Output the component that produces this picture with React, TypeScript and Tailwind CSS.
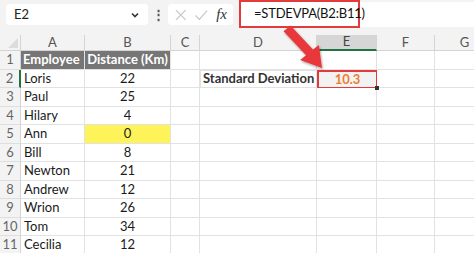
import React from "react";

const cols = [
  { key: "A", w: 64 },
  { key: "B", w: 86 },
  { key: "C", w: 29 },
  { key: "D", w: 117 },
  { key: "E", w: 60 },
  { key: "F", w: 58 },
  { key: "G", w: 60 },
];

const rows: [string, string][] = [
  ["Loris", "22"],
  ["Paul", "25"],
  ["Hilary", "4"],
  ["Ann", "0"],
  ["Bill", "8"],
  ["Newton", "21"],
  ["Andrew", "12"],
  ["Wrion", "26"],
  ["Tom", "34"],
  ["Cecilia", "12"],
];

const font = { fontFamily: "Lato, 'Open Sans', sans-serif" };

function Cell({ w, className = "", children }: { w: number; className?: string; children?: React.ReactNode }) {
  return (
    <div
      className={`h-full shrink-0 border-r border-b border-[#e2e2e2] flex items-center text-[13px] text-[#1a1a1a] overflow-visible whitespace-nowrap ${className}`}
      style={{ width: w }}
    >
      {children}
    </div>
  );
}

export default function App() {
  return (
    <div className="relative w-[474px] h-[253px] overflow-hidden bg-white" style={font}>
      {/* formula bar */}
      <div className="h-[35px] bg-[#f3f3f3] flex items-start">
        <div className="mt-[4px] ml-[6px] w-[142px] h-[21px] bg-white rounded-[4px] flex items-center justify-between px-[8px] text-[13px] text-[#222]">
          <span>E2</span>
          <svg width="10" height="10" viewBox="0 0 10 10">
            <path d="M2 3.5 L5 6.5 L8 3.5" stroke="#333" strokeWidth="1.6" fill="none" />
          </svg>
        </div>
        <div className="w-[20px] h-[29px] flex items-center justify-center text-[#555] text-[13px] font-bold">⋮</div>
        <div className="mt-[4px] w-[65px] h-[21px] bg-white rounded-[4px] flex items-center gap-[6px] px-[6px]">
          <svg width="14" height="14" viewBox="0 0 14 14">
            <path d="M2 2 L12 12 M12 2 L2 12" stroke="#c8c8c8" strokeWidth="1.3" />
          </svg>
          <svg width="15" height="14" viewBox="0 0 15 14">
            <path d="M1.5 7.5 L5.5 11.5 L13.5 2.5" stroke="#c8c8c8" strokeWidth="1.3" fill="none" />
          </svg>
          <span className="text-[15px] italic text-[#333] ml-[2px]" style={{ fontFamily: "'Liberation Serif', serif" }}>
            fx
          </span>
        </div>
        <div className="ml-[6px] mt-[2px] flex-1 h-[25px] bg-white relative">
          <div className="absolute left-0 top-[-2px] w-[121px] h-[28px] border-2 border-[#e23b3b] flex items-center pl-[13px] text-[13px] tracking-[-0.2px] text-[#111] whitespace-nowrap">
            =STDEVPA(B2:B11)
          </div>
        </div>
      </div>

      {/* column headers */}
      <div className="flex h-[16px] bg-[#f3f3f3] text-[13px] text-[#555]">
        <div className="w-[21px] shrink-0 border-r border-b border-[#d4d4d4] relative">
          <svg className="absolute right-[2px] bottom-[2px]" width="10" height="10" viewBox="0 0 10 10">
            <path d="M10 0 L10 10 L0 10 Z" fill="#dcdcdc" />
          </svg>
        </div>
        {cols.map((c) => (
          <div
            key={c.key}
            className={`shrink-0 flex items-center justify-center border-r border-[#d4d4d4] ${
              c.key === "E" ? "bg-[#d6d6d6] border-b-2 border-b-[#217346] text-[#444]" : "border-b border-b-[#d4d4d4]"
            }`}
            style={{ width: c.w }}
          >
            {c.key}
          </div>
        ))}
      </div>

      {/* grid rows */}
      <div className="flex flex-col">
        {Array.from({ length: 11 }).map((_, i) => {
          const r = i + 1;
          return (
            <div key={r} className="flex h-[18.5px]">
              <div
                className={`w-[21px] shrink-0 bg-[#f3f3f3] flex items-center justify-center text-[13px] text-[#666] border-b border-[#dedede] ${
                  r === 2 ? "border-r-2 border-r-[#217346] bg-[#e6e6e6]" : "border-r border-r-[#d4d4d4]"
                }`}
              >
                {r}
              </div>
              {r === 1 ? (
                <>
                  <Cell w={64} className="bg-[#767676] text-white font-bold pl-[2px] border-[#767676]">
                    Employee
                  </Cell>
                  <Cell w={86} className="bg-[#767676] text-white font-bold justify-center border-[#767676]">
                    Distance (Km)
                  </Cell>
                </>
              ) : (
                <>
                  <Cell w={64} className="pl-[3px]">
                    {rows[i - 1][0]}
                  </Cell>
                  <Cell w={86} className={`justify-center ${r === 5 ? "bg-[#fff35a]" : ""}`}>
                    {rows[i - 1][1]}
                  </Cell>
                </>
              )}
              <Cell w={29} />
              {r === 2 ? (
                <>
                  <Cell w={117} className="border border-[#555] font-bold pl-[2px] text-[#333]">
                    Standard Deviation
                  </Cell>
                  <Cell w={60} className="bg-[#f2f2f2] border-2 border-[#e23b3b] justify-center font-bold text-[#ed7d31] relative">
                    10.3
                    <span className="absolute right-[-3px] bottom-[-3px] w-[4px] h-[4px] bg-[#333]" />
                  </Cell>
                </>
              ) : (
                <>
                  <Cell w={117} />
                  <Cell w={60} />
                </>
              )}
              <Cell w={58} />
              <Cell w={60} />
            </div>
          );
        })}
      </div>

      {/* red arrow annotation */}
      <svg className="absolute left-0 top-0 pointer-events-none" width="474" height="253">
        <defs>
          <filter id="sh" x="-50%" y="-50%" width="200%" height="200%">
            <feDropShadow dx="1" dy="1.5" stdDeviation="1.2" floodColor="#000" floodOpacity="0.35" />
          </filter>
        </defs>
        <polygon
          points="290.5,25.6 313,49.6 318.9,44.9 322,68 300.1,59.9 306,55.2 283.5,31.2"
          fill="#e8383b"
          filter="url(#sh)"
        />
      </svg>
    </div>
  );
}
